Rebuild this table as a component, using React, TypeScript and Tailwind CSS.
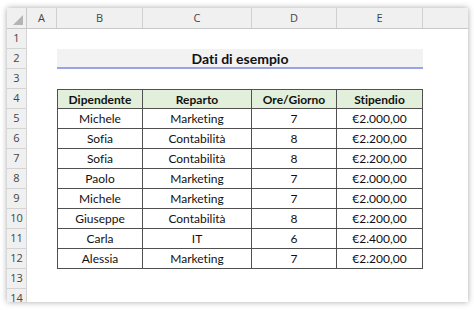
import React from "react";

const cols = ["A", "B", "C", "D", "E", ""];
const colW = ["w-[30px]", "w-[86px]", "w-[109px]", "w-[85px]", "w-[86px]", "w-[45px]"];

const data: [string, string, string, string][] = [
  ["Michele", "Marketing", "7", "€2.000,00"],
  ["Sofia", "Contabilità", "8", "€2.200,00"],
  ["Sofia", "Contabilità", "8", "€2.200,00"],
  ["Paolo", "Marketing", "7", "€2.000,00"],
  ["Michele", "Marketing", "7", "€2.000,00"],
  ["Giuseppe", "Contabilità", "8", "€2.200,00"],
  ["Carla", "IT", "6", "€2.400,00"],
  ["Alessia", "Marketing", "7", "€2.200,00"],
];

const tableW = ["w-[86px]", "w-[109px]", "w-[85px]", "w-[86px]"];

function RowHead({ n }: { n: number }) {
  return (
    <div className="w-[20px] shrink-0 h-full bg-[#f0f0f0] border-r border-b border-[#d4d4d4] flex items-center justify-center text-[11px] text-[#444] font-['Open_Sans',sans-serif]">
      {n}
    </div>
  );
}

function Row({ n, children }: { n: number; children?: React.ReactNode }) {
  return (
    <div className="h-[20px] shrink-0 flex">
      <RowHead n={n} />
      <div className="w-[30px] shrink-0" />
      {children}
    </div>
  );
}

function TableRow({ n, cells, header }: { n: number; cells: string[]; header?: boolean }) {
  return (
    <Row n={n}>
      {cells.map((c, i) => (
        <div
          key={i}
          className={`${tableW[i]} shrink-0 h-full flex items-center justify-center pt-[1px] border-b border-r border-[#505050] ${i === 0 ? "border-l" : ""} ${header ? "border-t bg-[#e2efda] font-bold" : ""} text-[12px] text-[#111]`}
        >
          {c}
        </div>
      ))}
    </Row>
  );
}

export default function App() {
  return (
    <div className="w-[474px] h-[310px] bg-white pt-[8px] pl-[7px] font-['Lato',sans-serif] [font-variant-ligatures:none]">
      <div className="w-[461px] h-[294px] bg-white shadow-[0_0_6px_rgba(0,0,0,0.35)] overflow-hidden flex flex-col">
        {/* column header */}
        <div className="h-[21px] shrink-0 flex bg-[#f0f0f0] border-b border-[#c8c8c8]">
          <div className="w-[20px] shrink-0 h-full border-r border-[#c8c8c8] flex items-end justify-end p-[3px]">
            <svg width="10" height="10" viewBox="0 0 10 10">
              <polygon points="10,0 10,10 0,10" fill="#b4b4b4" />
            </svg>
          </div>
          {cols.map((c, i) => (
            <div
              key={i}
              className={`${colW[i]} shrink-0 h-full ${i < 5 ? "border-r border-[#d0d0d0]" : ""} flex items-center justify-center text-[11px] text-[#444] font-['Open_Sans',sans-serif]`}
            >
              {c}
            </div>
          ))}
        </div>
        <Row n={1} />
        <Row n={2}>
          <div className="w-[366px] shrink-0 h-full bg-[#f2f2f2] border-b-2 border-[#9aa3e6] flex items-center justify-center text-[14px] font-bold text-[#111]">
            Dati di esempio
          </div>
        </Row>
        <Row n={3} />
        <TableRow n={4} header cells={["Dipendente", "Reparto", "Ore/Giorno", "Stipendio"]} />
        {data.map((r, i) => (
          <TableRow key={i} n={5 + i} cells={r} />
        ))}
        <Row n={13} />
        <Row n={14} />
      </div>
    </div>
  );
}
